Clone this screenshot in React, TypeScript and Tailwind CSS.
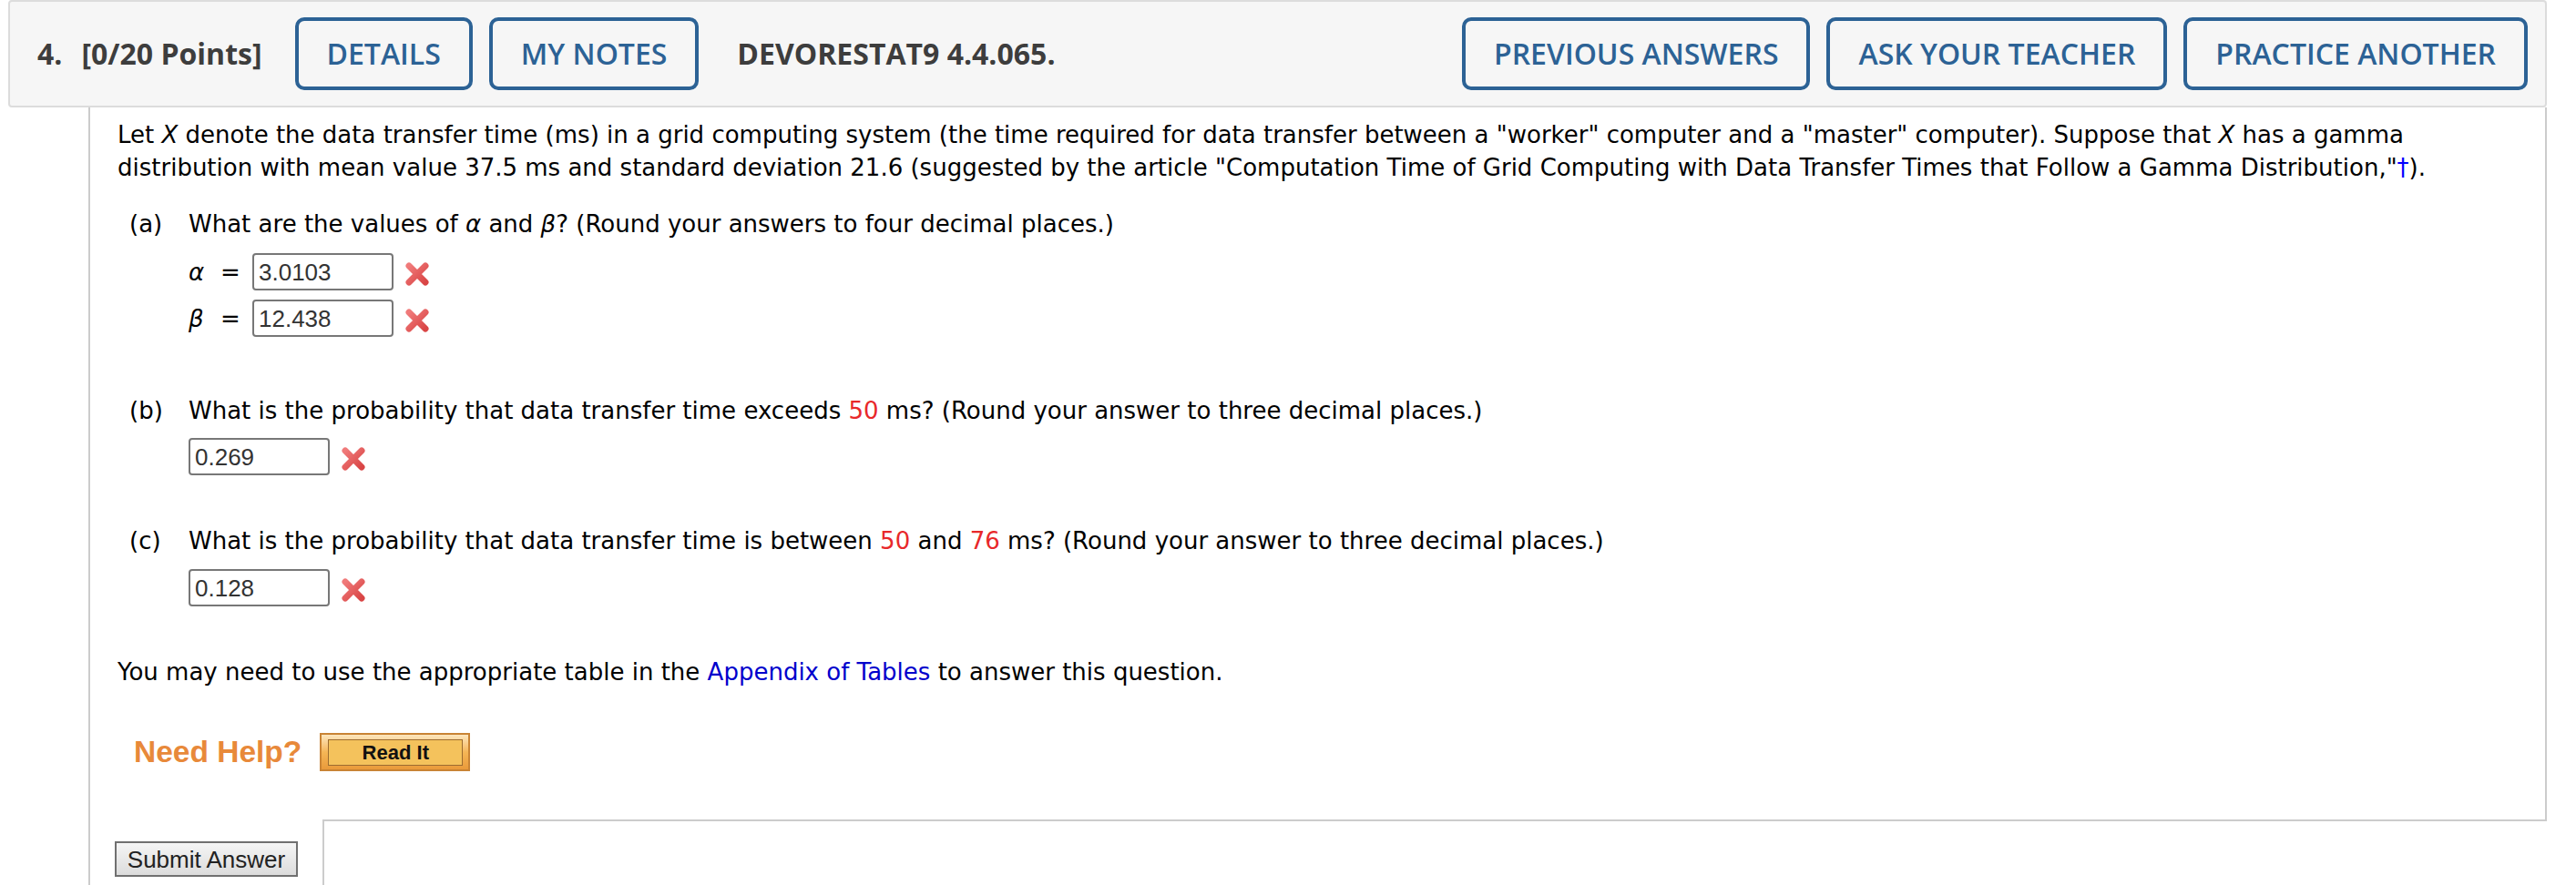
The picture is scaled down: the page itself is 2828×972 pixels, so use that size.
import React from "react";

const body = { fontFamily: '"DejaVu Sans", Verdana, sans-serif' };
const arial = { fontFamily: '"Liberation Sans", Arial, sans-serif' };
const open = { fontFamily: '"Open Sans", sans-serif' };

function XMark() {
  return (
    <svg width="28" height="26" viewBox="0 0 28 26" className="ml-[12px] mt-[5px] shrink-0">
      <defs>
        <linearGradient id="xg" x1="0" y1="0" x2="1" y2="1">
          <stop offset="0" stopColor="#f07a7a" />
          <stop offset="1" stopColor="#d94545" />
        </linearGradient>
      </defs>
      <path d="M5 4 L23 22 M23 4 L5 22" stroke="url(#xg)" strokeWidth="7" strokeLinecap="round" fill="none" />
    </svg>
  );
}

function Answer({ value }: { value: string }) {
  return (
    <div className="flex items-center">
      <div
        className="w-[155px] h-[41px] border-2 border-[#777] rounded-[4px] bg-white pl-[5px] flex items-center text-[26px] text-[#333]"
        style={arial}
      >
        {value}
      </div>
      <XMark />
    </div>
  );
}

function HeaderButton({ label }: { label: string }) {
  return (
    <div className="h-[80px] border-[4px] border-[#2c6295] rounded-[10px] px-[31px] flex items-center text-[32px] font-semibold text-[#2c6295] whitespace-nowrap">
      {label}
    </div>
  );
}

const Red = ({ children }: { children: React.ReactNode }) => (
  <span className="text-[#e8282a]">{children}</span>
);

export default function App() {
  return (
    <div className="w-[2828px] h-[972px] bg-white overflow-hidden">
      <div
        className="ml-[9px] mr-[32px] h-[118px] border-2 border-[#dcdcdc] rounded-[4px] bg-[#f6f6f6] flex items-center pl-[30px] pr-[19px]"
        style={open}
      >
        <span className="text-[32px] font-bold text-[#3d3d3d] whitespace-nowrap">4.</span>
        <span className="ml-[21px] text-[32px] font-bold text-[#3d3d3d] whitespace-nowrap">[0/20 Points]</span>
        <div className="ml-[36px]">
          <HeaderButton label="DETAILS" />
        </div>
        <div className="ml-[18px]">
          <HeaderButton label="MY NOTES" />
        </div>
        <span className="ml-[42px] text-[32px] font-bold text-[#3d3d3d] whitespace-nowrap">DEVORESTAT9 4.4.065.</span>
        <div className="flex-1" />
        <div className="flex gap-[18px]">
          <HeaderButton label="PREVIOUS ANSWERS" />
          <HeaderButton label="ASK YOUR TEACHER" />
          <HeaderButton label="PRACTICE ANOTHER" />
        </div>
      </div>

      <div className="ml-[97px] mr-[32px] h-[854px] border-l-2 border-[#ccc] flex flex-col">
        <div className="h-[782px] border-r-2 border-[#ccc] pl-[30px] pr-[30px] pt-[12px] text-[26px] leading-[36px] text-black" style={body}>
          <p>
            Let <i>X</i> denote the data transfer time (ms) in a grid computing system (the time required for data
            transfer between a "worker" computer and a "master" computer). Suppose that <i>X</i> has a gamma
            distribution with mean value 37.5 ms and standard deviation 21.6 (suggested by the article "Computation
            Time of Grid Computing with Data Transfer Times that Follow a Gamma Distribution,"
            <span className="text-[#0000ff]">†</span>).
          </p>

          <div className="mt-[26px] flex">
            <span className="ml-[13px] w-[65px] shrink-0">(a)</span>
            <span>
              What are the values of <i>α</i> and <i>β</i>? (Round your answers to four decimal places.)
            </span>
          </div>
          <div className="ml-[78px] mt-[14px] flex items-center h-[41px]">
            <span className="w-[35px] italic">α</span>
            <span className="w-[35px]">=</span>
            <Answer value="3.0103" />
          </div>
          <div className="ml-[78px] mt-[10px] flex items-center h-[41px]">
            <span className="w-[35px] italic">β</span>
            <span className="w-[35px]">=</span>
            <Answer value="12.438" />
          </div>

          <div className="mt-[63px] flex">
            <span className="ml-[13px] w-[65px] shrink-0">(b)</span>
            <span>
              What is the probability that data transfer time exceeds <Red>50</Red> ms? (Round your answer to three
              decimal places.)
            </span>
          </div>
          <div className="ml-[78px] mt-[12px]">
            <Answer value="0.269" />
          </div>

          <div className="mt-[54px] flex">
            <span className="ml-[13px] w-[65px] shrink-0">(c)</span>
            <span>
              What is the probability that data transfer time is between <Red>50</Red> and <Red>76</Red> ms? (Round
              your answer to three decimal places.)
            </span>
          </div>
          <div className="ml-[78px] mt-[13px]">
            <Answer value="0.128" />
          </div>

          <p className="mt-[54px]">
            You may need to use the appropriate table in the <span className="text-[#0000cc]">Appendix of Tables</span> to
            answer this question.
          </p>

          <div className="mt-[49px] ml-[18px] flex items-center h-[42px]" style={arial}>
            <span className="text-[33.5px] font-bold text-[#e8893a] leading-none">Need Help?</span>
            <div className="ml-[20px] w-[165px] h-[42px] border-2 border-[#c98435] bg-linear-to-b from-[#fce6bd] via-[#f5b656] to-[#e99a3a] pt-[5px] pb-[4px] pl-[7px] pr-[6px]">
              <div className="h-full border-[1.5px] border-[#9c6c30] bg-[#f4c25c] flex items-center justify-center text-[22px] font-bold text-[#111] leading-none">
                Read It
              </div>
            </div>
          </div>
        </div>

        <div className="flex flex-1">
          <div className="w-[255px] shrink-0 pl-[27px] pt-[24px]">
            <div
              className="w-[201px] h-[39px] border-2 border-[#707070] bg-linear-to-b from-[#f5f5f5] to-[#dcdcdc] flex items-center justify-center text-[26px] text-[#222] leading-none"
              style={arial}
            >
              Submit Answer
            </div>
          </div>
          <div className="flex-1 border-t-2 border-l-2 border-[#ccc]" />
        </div>
      </div>
    </div>
  );
}
